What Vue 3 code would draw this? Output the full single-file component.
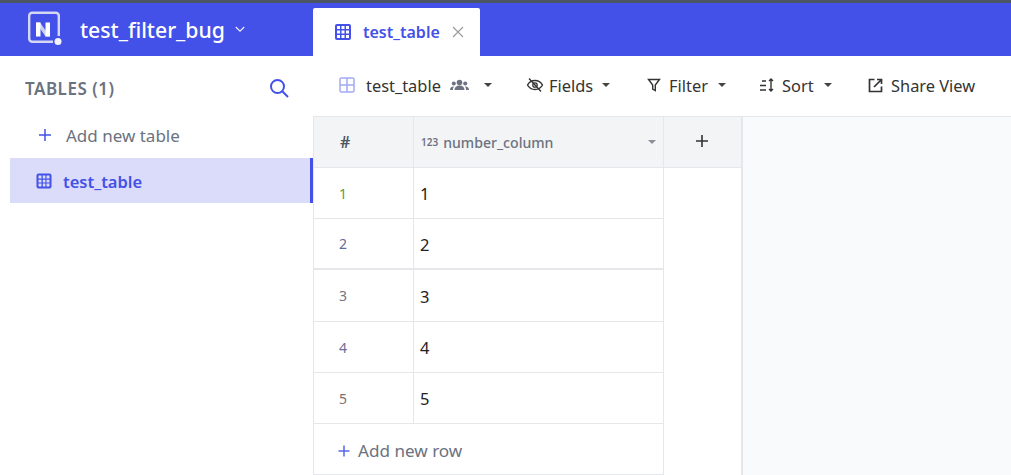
<script setup>
const rows = [
  { n: 1, c: '#5d9a45', h: 51, thick: false },
  { n: 2, c: '#5f6b99', h: 51, thick: true },
  { n: 3, c: '#7b6f80', h: 52, thick: false },
  { n: 4, c: '#6f6f95', h: 51, thick: false },
  { n: 5, c: '#7f6f70', h: 51, thick: false }
]
</script>

<template>
  <div class="page">
    <div class="topline"></div>
    <header class="header">
      <div class="brand">
        <svg class="logo" width="36" height="36" viewBox="0 0 36 36">
          <path d="M27 30.800H6.200a3 3 0 0 1-3-3V4.700a3 3 0 0 1 3-3h23.600a3 3 0 0 1 3 3V25" fill="none" stroke="#d5d8f5" stroke-width="2.400"/>
          <path d="M14 11.500 24 25.500h-4.500L10 11.500z" fill="#c9cdf0"/>
          <path d="M10 11.500h4.500v14H10zM19.500 11.500H24v14h-4.500z" fill="#fff"/>
          <circle cx="32" cy="30.500" r="3.500" fill="#f2f3fd"/>
        </svg>
        <span class="project">test_filter_bug</span>
        <svg class="chev" width="10" height="7" viewBox="0 0 10 7"><path d="M.8 1 5 5.200 9.200 1" fill="none" stroke="#e8eafc" stroke-width="1.300"/></svg>
      </div>
      <div class="tab">
        <svg class="gridicon" width="18" height="18" viewBox="0 0 18 18">
          <rect x="1" y="1" width="16" height="16" rx="2" fill="#4351e8"/>
          <path d="M3 3h3v3H3zM7.500 3h3v3h-3zM12 3h3v3h-3zM3 7.500h3v3H3zM7.500 7.500h3v3h-3zM12 7.500h3v3h-3zM3 12h3v3H3zM7.500 12h3v3h-3zM12 12h3v3h-3z" fill="#fff"/>
        </svg>
        <span class="tabname">test_table</span>
        <svg width="12" height="12" viewBox="0 0 12 12"><path d="M1 1l10 10M11 1 1 11" stroke="#9a9a9a" stroke-width="1.100" fill="none"/></svg>
      </div>
    </header>
    <div class="body">
      <aside class="sidebar">
        <div class="side-title">
          <span>TABLES (1)</span>
          <svg width="22" height="22" viewBox="0 0 22 22"><circle cx="9.500" cy="9.500" r="6.500" fill="none" stroke="#4351e8" stroke-width="2"/><path d="M14.500 14.500 20 20" stroke="#4351e8" stroke-width="2"/></svg>
        </div>
        <div class="side-add">
          <svg width="14" height="14" viewBox="0 0 14 14"><path d="M7 1v12M1 7h12" stroke="#4351e8" stroke-width="1.500"/></svg>
          <span>Add new table</span>
        </div>
        <div class="side-item">
          <svg width="16" height="16" viewBox="0 0 16 16">
            <rect x=".5" y=".5" width="15" height="15" rx="2" fill="#4351e8"/>
            <path d="M2.500 2.500h3v3h-3zM6.800 2.500h2.600v3H6.800zM10.500 2.500h3v3h-3zM2.500 6.800h3v2.600h-3zM6.800 6.800h2.600v2.600H6.800zM10.500 6.800h3v2.600h-3zM2.500 10.500h3v3h-3zM6.800 10.500h2.600v3H6.800zM10.500 10.500h3v3h-3z" fill="#dadcf9"/>
          </svg>
          <span>test_table</span>
        </div>
      </aside>
      <main class="main">
        <div class="toolbar">
          <div class="tool view">
            <svg width="16" height="16" viewBox="0 0 16 16"><rect x="1" y="1" width="14" height="14" rx="1.500" fill="none" stroke="#a3aaf3" stroke-width="1.500"/><path d="M8 1v14M1 8h14" stroke="#a3aaf3" stroke-width="1.500"/></svg>
            <span class="t-view">test_table</span>
            <svg class="people" width="19" height="12" viewBox="0 0 19 12"><circle cx="9.500" cy="3.500" r="2.800" fill="#6b7280"/><circle cx="3.800" cy="4.500" r="2" fill="#6b7280"/><circle cx="15.200" cy="4.500" r="2" fill="#6b7280"/><path d="M4.500 11c0-3 2-4.500 5-4.500s5 1.500 5 4.500zM0 11c0-2 1.300-3.500 3.500-3.500l.5.200C3 8.500 3 10 3 11zM19 11c0-2-1.300-3.500-3.500-3.500l-.5.200c1 .8 1 2.300 1 3.300z" fill="#6b7280"/></svg>
            <i class="caret"></i>
          </div>
          <div class="tool fields">
            <svg width="18" height="18" viewBox="0 0 18 18"><path d="M1.500 9S4 4.500 9 4.500 16.500 9 16.500 9 14 13.500 9 13.500 1.500 9 1.500 9z" fill="none" stroke="#333" stroke-width="1.400"/><circle cx="9" cy="9" r="2.200" fill="none" stroke="#333" stroke-width="1.300"/><path d="M3 2.500 15 15.500" stroke="#333" stroke-width="1.400"/></svg>
            <span>Fields</span>
            <i class="caret"></i>
          </div>
          <div class="tool filter">
            <svg width="14" height="14" viewBox="0 0 14 14"><path d="M1.500 1.500h11L8.300 7v5.500L5.700 11V7z" fill="none" stroke="#333" stroke-width="1.400"/></svg>
            <span>Filter</span>
            <i class="caret"></i>
          </div>
          <div class="tool sort">
            <svg width="16" height="14" viewBox="0 0 16 14"><path d="M3 3h4M1 7.500h6M1 12h6" stroke="#333" stroke-width="1.400"/><path d="M12 1v12M10 3l2-2 2 2M10 11l2 2 2-2" stroke="#333" stroke-width="1.400" fill="none"/></svg>
            <span>Sort</span>
            <i class="caret"></i>
          </div>
          <div class="tool share">
            <svg width="15" height="15" viewBox="0 0 15 15"><path d="M6.500 1.500H1.500v12h12v-5" fill="none" stroke="#333" stroke-width="1.700"/><path d="M9 1.500h4.500V6M13.500 1.500 6 9" fill="none" stroke="#333" stroke-width="1.700"/></svg>
            <span>Share View</span>
          </div>
        </div>
        <div class="gridarea">
          <div class="table">
            <div class="row head">
              <div class="c-num hash">#</div>
              <div class="c-val colhead">
                <span class="n123">123</span>
                <span class="colname">number_column</span>
                <i class="caret small"></i>
              </div>
            </div>
            <div v-for="r in rows" :key="r.n" class="row" :class="{ thick: r.thick }" :style="{ height: r.h + 'px' }">
              <div class="c-num" :style="{ color: r.c }">{{ r.n }}</div>
              <div class="c-val value">{{ r.n }}</div>
            </div>
            <div class="addrow">
              <svg width="12" height="12" viewBox="0 0 12 12"><path d="M6 .5v11M.5 6h11" stroke="#5a67ec" stroke-width="1.500"/></svg>
              <span>Add new row</span>
            </div>
          </div>
          <div class="pluscol">
            <div class="plushead">
              <svg width="14" height="14" viewBox="0 0 14 14"><path d="M7 1v12M1 7h12" stroke="#333" stroke-width="1.600"/></svg>
            </div>
          </div>
          <div class="rest"></div>
        </div>
      </main>
    </div>
  </div>
</template>

<style>
html, body { margin: 0; background: #fff; overflow: hidden; }
</style>

<style scoped>
.page { width: 1011px; height: 475px; display: flex; flex-direction: column; overflow: hidden; font-family: "Noto Sans", "Open Sans", sans-serif; background: #fff; }
.topline { height: 3px; background: #4b5563; flex: none; }
.header { height: 53px; flex: none; background: #4351e8; display: flex; align-items: flex-end; }
.brand { width: 313px; height: 53px; display: flex; align-items: center; flex: none; box-sizing: border-box; padding-left: 26px; }
.logo { flex: none; margin-bottom: 2px; }
.project { color: #fff; font-size: 21.200px; font-weight: 500; margin-left: 18px; line-height: 53px; }
.chev { margin: 0 0 0 10px; }
.tab { width: 167px; height: 48px; background: #fff; border-radius: 2px 2px 0 0; display: flex; align-items: center; box-sizing: border-box; padding-left: 21px; }
.tabname { color: #4351e8; font-size: 16px; font-weight: 600; margin: 0 12px 0 11px; }
.body { flex: 1; display: flex; min-height: 0; }
.sidebar { width: 313px; flex: none; box-sizing: border-box; padding-left: 10px; display: flex; flex-direction: column; }
.side-title { height: 64px; display: flex; align-items: center; justify-content: space-between; box-sizing: border-box; padding: 0 23px 0 15px; color: #6b7280; font-size: 17px; letter-spacing: .5px; font-weight: 600; }
.side-add { height: 38px; box-sizing: border-box; padding: 0 0 8px 28px; display: flex; align-items: center; gap: 14px; color: #6b7280; font-size: 17px; }
.side-item { height: 45px; box-sizing: border-box; background: #dadcf9; border-right: 3px solid #4351e8; display: flex; align-items: center; gap: 11px; padding-left: 26px; color: #4351e8; font-size: 16.500px; font-weight: 600; }
.side-item span { padding-top: 1px; }
.main { flex: 1; display: flex; flex-direction: column; min-width: 0; }
.toolbar { height: 60px; box-sizing: border-box; padding-bottom: 2px; flex: none; display: flex; align-items: center; color: #333; font-size: 16.400px; }
.tool { display: flex; align-items: center; flex: none; }
.view { margin-left: 26px; width: 187px; }
.t-view { margin-left: 11px; }
.people { margin-left: 9px; }
.view .caret { margin-left: 15px; }
.fields { width: 121px; gap: 5px; }
.fields .caret { margin-left: 4px; }
.filter { width: 112px; gap: 8px; }
.filter .caret { margin-left: 2px; }
.sort { width: 109px; gap: 7px; }
.sort .caret { margin-left: 3px; }
.share { gap: 8px; }
.caret { width: 0; height: 0; border-left: 4px solid transparent; border-right: 4px solid transparent; border-top: 4px solid #444; display: block; flex: none; }
.caret.small { border-top-color: #8a8f9a; margin-left: auto; margin-right: 8px; }
.gridarea { flex: 1; display: flex; min-height: 0; border-top: 1px solid #e5e7eb; }
.table { width: 351px; flex: none; border-left: 1px solid #e5e7eb; box-sizing: border-box; display: flex; flex-direction: column; }
.row { display: flex; box-sizing: border-box; height: 51px; border-bottom: 1px solid #e5e7eb; }
.row.head { background: #f3f4f6; }
.row.thick { border-bottom-width: 2px; }
.c-num { width: 100px; flex: none; box-sizing: border-box; padding-left: 25px; display: flex; align-items: center; font-size: 14px; border-right: 1px solid #e5e7eb; }
.hash { font-weight: 600; font-size: 16px; color: #4b5563; padding-left: 26px; }
.c-val { flex: 1; display: flex; align-items: center; box-sizing: border-box; padding-left: 7px; }
.colhead { gap: 5px; }
.n123 { font-size: 10px; font-weight: 600; color: #6b7280; }
.colname { color: #6b7280; font-size: 14.100px; font-weight: 500; }
.value { font-size: 16.500px; color: #222; padding-left: 6px; padding-top: 1px; }
.addrow { height: 51px; border-bottom: 1px solid #e5e7eb; box-sizing: border-box; display: flex; align-items: center; gap: 8px; padding: 3px 0 0 24px; color: #6b7280; font-size: 17.100px; }
.pluscol { flex: none; box-sizing: border-box; border-left: 1px solid #e5e7eb; border-right: 2px solid #e5e7eb; margin-left: -1px; width: 80px; }
.plushead { height: 51px; box-sizing: border-box; padding: 0 2px 2px 0; background: #f3f4f6; border-bottom: 1px solid #e5e7eb; display: flex; align-items: center; justify-content: center; }
.rest { flex: 1; background: #f9fafb; }
</style>
